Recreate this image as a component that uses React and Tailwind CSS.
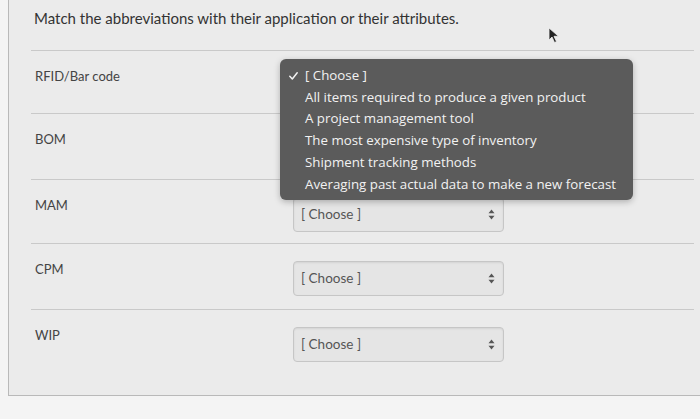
const rows = [
  { label: "RFID/Bar code", h: "h-[63px]", covered: true },
  { label: "BOM", h: "h-[66px]", covered: true },
  { label: "MAM", h: "h-[64px]" },
  { label: "CPM", h: "h-[66px]" },
  { label: "WIP", h: "flex-1" },
];

const options = [
  "All items required to produce a given product",
  "A project management tool",
  "The most expensive type of inventory",
  "Shipment tracking methods",
  "Averaging past actual data to make a new forecast",
];

const SelectBox = ({ covered }) => (
  <div className="mt-[17px] flex h-[35px] w-[211px] items-center justify-between rounded-[4px] border border-[#c6c6c6] bg-[#e5e5e5] pl-[7px] pr-[8px] shadow-[inset_0_1px_2px_rgba(0,0,0,0.08)]">
    {!covered && <span className="text-[13.5px] text-[#555]">[ Choose ]</span>}
    <svg width="7" height="11" viewBox="0 0 7 11" className="ml-auto text-[#555]">
      <path d="M3.5 0.5 L6.5 4.3 L0.5 4.3 Z" fill="currentColor" />
      <path d="M3.5 10.5 L6.5 6.7 L0.5 6.7 Z" fill="currentColor" />
    </svg>
  </div>
);

export default function App() {
  return (
    <div className="relative h-[419px] w-[700px] overflow-hidden bg-[#f4f4f4] font-['Lato',sans-serif]">
      <div className="ml-[8px] flex h-[396px] flex-col border-b border-l border-[#b9b9b9] bg-[#ebebeb] pl-[22px] pr-[6px]">
        <div className="h-[50px] pl-[3px] pt-[7px] text-[15px] text-[#333]">
          Match the abbreviations with their application or their attributes.
        </div>
        {rows.map((row) => (
          <div key={row.label} className={`flex items-start border-t border-[#c9c9c9] ${row.h}`}>
            <div className="w-[262px] pl-[4px] pt-[16px] text-[13px] text-[#444]">{row.label}</div>
            <SelectBox covered={row.covered} />
          </div>
        ))}
      </div>

      <div className="absolute left-[280px] top-[59px] w-[353px] rounded-[6px] bg-[#5b5b5b] pb-[5px] pt-[6px] font-['Open_Sans',sans-serif] text-[13.3px] leading-[21.7px] text-[#f2f2f2] shadow-[0_2px_6px_rgba(0,0,0,0.25)]">
        <div className="flex items-center">
          <span className="flex w-[25px] justify-start pl-[9px]">
            <svg width="9" height="8" viewBox="0 0 9 8">
              <path d="M0.8 4.3 L3.3 7 L8.2 0.8" fill="none" stroke="#f2f2f2" strokeWidth="1.5" strokeLinecap="round" strokeLinejoin="round" />
            </svg>
          </span>
          <span>[ Choose ]</span>
        </div>
        {options.map((o) => (
          <div key={o} className="pl-[25px]">{o}</div>
        ))}
      </div>

      <svg className="absolute left-[548px] top-[27px]" width="12" height="17" viewBox="0 0 12 17">
        <path d="M1 1 L1 13 L4 10 L6.5 15.5 L8.5 14.6 L6 9.3 L10.5 9.3 Z" fill="#222" stroke="#eee" strokeWidth="0.8" />
      </svg>
    </div>
  );
}
